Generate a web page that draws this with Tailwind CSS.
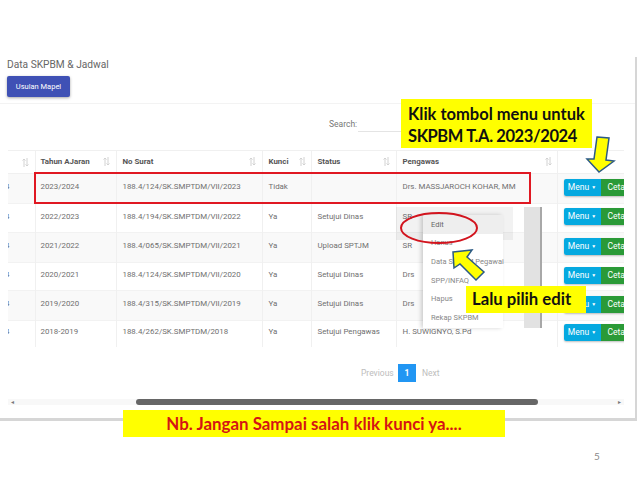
<!DOCTYPE html>
<html lang="en">
  <head>
    <meta charset="UTF-8" />
    <title>Data SKPBM</title>
    <script src="https://cdn.jsdelivr.net/npm/@tailwindcss/browser@4"></script>
  </head>
  <body class="bg-white overflow-hidden font-['Roboto',sans-serif]">
    <svg class="hidden">
      <symbol id="sort" viewBox="0 0 7 9">
        <path d="M2 9V1M.5 2.5 2 1l1.500 1.500M5 0v8M3.500 6.500 5 8l1.500-1.500" fill="none" stroke="#d2d2d2" stroke-width="1" />
      </symbol>
    </svg>
    <div class="relative w-[638px] h-[478px] bg-white overflow-hidden">
      <!-- Screenshot card -->
      <div class="mt-[57px] w-[637px] h-[364px] border-r-2 border-b-3 border-[#d6d6d6] bg-white flex flex-col">
        <div class="pl-[7px] h-[47px] border-b border-[#f3f3f3]">
          <div class="text-[10.200px] leading-[15px] text-[#666]">Data SKPBM &amp; Jadwal</div>
          <button class="w-[63px] h-[21px] bg-[#3f51b5] rounded-[2px] text-[7.500px] text-white shadow-[0_1px_3px_rgba(0,0,0,0.35)]">Usulan Mapel</button>
        </div>

        <div class="h-[46px] flex items-start pl-[329px] pt-[15px]">
          <span class="w-[29px] text-[8.500px] leading-[11px] text-[#777]">Search:</span>
          <div class="mt-[12px] w-[100px] border-b border-[#e4e4e4]"></div>
        </div>

        <!-- Table -->
        <div class="ml-[8px] w-[616px] h-[197px] overflow-hidden">
          <table class="table-fixed w-[640px] border-collapse text-[7.900px] text-[#6f6f6f] [&_td]:pb-[3px]">
            <colgroup>
              <col class="w-[27px]" />
              <col class="w-[81px]" />
              <col class="w-[146px]" />
              <col class="w-[49px]" />
              <col class="w-[85px]" />
              <col class="w-[161px]" />
              <col class="w-[91px]" />
            </colgroup>
            <thead>
              <tr class="h-[23px] border-y border-[#f0f0f0] font-bold text-[#555]">
                <th class="border-r border-[#f0f0f0] pr-[6px]"><div class="flex justify-end"><svg width="7" height="9"><use href="#sort" /></svg></div></th>
                <th class="border-r border-[#f0f0f0] pl-[5px] pr-[6px]"><div class="flex justify-between items-center"><span>Tahun AJaran</span><svg width="7" height="9"><use href="#sort" /></svg></div></th>
                <th class="border-r border-[#f0f0f0] pl-[6px] pr-[6px]"><div class="flex justify-between items-center"><span>No Surat</span><svg width="7" height="9"><use href="#sort" /></svg></div></th>
                <th class="border-r border-[#f0f0f0] pl-[6px] pr-[5px]"><div class="flex justify-between items-center"><span>Kunci</span><svg width="7" height="9"><use href="#sort" /></svg></div></th>
                <th class="border-r border-[#f0f0f0] pl-[6px] pr-[6px]"><div class="flex justify-between items-center"><span>Status</span><svg width="7" height="9"><use href="#sort" /></svg></div></th>
                <th class="border-r border-[#f0f0f0] pl-[6px] pr-[5px]"><div class="flex justify-between items-center"><span>Pengawas</span><svg width="7" height="9"><use href="#sort" /></svg></div></th>
                <th></th>
              </tr>
            </thead>
            <tbody>
              <tr class="h-[30px] bg-[#f9f9f9] border-b border-[#f2f2f2]">
                <td class="text-[#666]"><span class="block -ml-[3px]">4</span></td>
                <td class="border-x border-[#f0f0f0] pl-[5px]">2023/2024</td>
                <td class="border-r border-[#f0f0f0] pl-[6px]">188.4/124/SK.SMPTDM/VII/2023</td>
                <td class="border-r border-[#f0f0f0] pl-[6px]">Tidak</td>
                <td class="border-r border-[#f0f0f0] pl-[6px]"></td>
                <td class="border-r border-[#f0f0f0] pl-[6px]">Drs. MASSJAROCH KOHAR, MM</td>
                <td class="pl-[6px]"><div class="flex h-[17px] w-[84px] rounded-[2px] overflow-hidden text-white text-[8.500px] leading-[17px] shadow-[0_1px_2px_rgba(0,0,0,0.25)]"><span class="w-[37px] bg-[#05a9e0] text-center">Menu <span class="text-[5px] align-[1px]">▼</span></span><span class="w-[47px] pl-[7px] bg-[#2a9a37]">Cetak</span></div></td>
              </tr>
              <tr class="h-[29px] border-b border-[#f2f2f2]">
                <td class="text-[#666]"><span class="block -ml-[3px]">4</span></td>
                <td class="border-x border-[#f0f0f0] pl-[5px]">2022/2023</td>
                <td class="border-r border-[#f0f0f0] pl-[6px]">188.4/194/SK.SMPTDM/VII/2022</td>
                <td class="border-r border-[#f0f0f0] pl-[6px]">Ya</td>
                <td class="border-r border-[#f0f0f0] pl-[6px]">Setujui Dinas</td>
                <td class="border-r border-[#f0f0f0] pl-[6px]">SR</td>
                <td class="pl-[6px]"><div class="flex h-[17px] w-[84px] rounded-[2px] overflow-hidden text-white text-[8.500px] leading-[17px] shadow-[0_1px_2px_rgba(0,0,0,0.25)]"><span class="w-[37px] bg-[#05a9e0] text-center">Menu <span class="text-[5px] align-[1px]">▼</span></span><span class="w-[47px] pl-[7px] bg-[#2a9a37]">Cetak</span></div></td>
              </tr>
              <tr class="h-[30px] bg-[#f9f9f9] border-b border-[#f2f2f2]">
                <td class="text-[#666]"><span class="block -ml-[3px]">4</span></td>
                <td class="border-x border-[#f0f0f0] pl-[5px]">2021/2022</td>
                <td class="border-r border-[#f0f0f0] pl-[6px]">188.4/065/SK.SMPTDM/VII/2021</td>
                <td class="border-r border-[#f0f0f0] pl-[6px]">Ya</td>
                <td class="border-r border-[#f0f0f0] pl-[6px]">Upload SPTJM</td>
                <td class="border-r border-[#f0f0f0] pl-[6px]">SR</td>
                <td class="pl-[6px]"><div class="flex h-[17px] w-[84px] rounded-[2px] overflow-hidden text-white text-[8.500px] leading-[17px] shadow-[0_1px_2px_rgba(0,0,0,0.25)]"><span class="w-[37px] bg-[#05a9e0] text-center">Menu <span class="text-[5px] align-[1px]">▼</span></span><span class="w-[47px] pl-[7px] bg-[#2a9a37]">Cetak</span></div></td>
              </tr>
              <tr class="h-[28px] border-b border-[#f2f2f2]">
                <td class="text-[#666]"><span class="block -ml-[3px]">4</span></td>
                <td class="border-x border-[#f0f0f0] pl-[5px]">2020/2021</td>
                <td class="border-r border-[#f0f0f0] pl-[6px]">188.4/124/SK.SMPTDM/VII/2020</td>
                <td class="border-r border-[#f0f0f0] pl-[6px]">Ya</td>
                <td class="border-r border-[#f0f0f0] pl-[6px]">Setujui Dinas</td>
                <td class="border-r border-[#f0f0f0] pl-[6px]">Drs</td>
                <td class="pl-[6px]"><div class="flex h-[17px] w-[84px] rounded-[2px] overflow-hidden text-white text-[8.500px] leading-[17px] shadow-[0_1px_2px_rgba(0,0,0,0.25)]"><span class="w-[37px] bg-[#05a9e0] text-center">Menu <span class="text-[5px] align-[1px]">▼</span></span><span class="w-[47px] pl-[7px] bg-[#2a9a37]">Cetak</span></div></td>
              </tr>
              <tr class="h-[30px] bg-[#f9f9f9] border-b border-[#f2f2f2]">
                <td class="text-[#666]"><span class="block -ml-[3px]">4</span></td>
                <td class="border-x border-[#f0f0f0] pl-[5px]">2019/2020</td>
                <td class="border-r border-[#f0f0f0] pl-[6px]">188.4/315/SK.SMPTDM/VII/2019</td>
                <td class="border-r border-[#f0f0f0] pl-[6px]">Ya</td>
                <td class="border-r border-[#f0f0f0] pl-[6px]">Setujui Dinas</td>
                <td class="border-r border-[#f0f0f0] pl-[6px]">Drs</td>
                <td class="pl-[6px]"><div class="flex h-[17px] w-[84px] rounded-[2px] overflow-hidden text-white text-[8.500px] leading-[17px] shadow-[0_1px_2px_rgba(0,0,0,0.25)]"><span class="w-[37px] bg-[#05a9e0] text-center">Menu <span class="text-[5px] align-[1px]">▼</span></span><span class="w-[47px] pl-[7px] bg-[#2a9a37]">Cetak</span></div></td>
              </tr>
              <tr class="h-[27px] border-b-2 border-[#eeeeee]">
                <td class="text-[#666]"><span class="block -ml-[3px]">4</span></td>
                <td class="border-x border-[#f0f0f0] pl-[5px]">2018-2019</td>
                <td class="border-r border-[#f0f0f0] pl-[6px]">188.4/262/SK.SMPTDM/2018</td>
                <td class="border-r border-[#f0f0f0] pl-[6px]">Ya</td>
                <td class="border-r border-[#f0f0f0] pl-[6px]">Setujui Pengawas</td>
                <td class="border-r border-[#f0f0f0] pl-[6px]">H. SUWIGNYO, S.Pd</td>
                <td class="pl-[6px]"><div class="flex h-[17px] w-[84px] rounded-[2px] overflow-hidden text-white text-[8.500px] leading-[17px] shadow-[0_1px_2px_rgba(0,0,0,0.25)]"><span class="w-[37px] bg-[#05a9e0] text-center">Menu <span class="text-[5px] align-[1px]">▼</span></span><span class="w-[47px] pl-[7px] bg-[#2a9a37]">Cetak</span></div></td>
              </tr>
            </tbody>
          </table>
        </div>

        <!-- Pagination -->
        <div class="h-[52px] pt-[17px] pl-[361px] flex items-start text-[8.500px] text-[#bdbdbd]">
          <span class="w-[37px] leading-[18px]">Previous</span>
          <span class="w-[18px] h-[18px] bg-[#2196f3] text-white text-center font-bold leading-[18px]">1</span>
          <span class="ml-[6px] leading-[18px]">Next</span>
        </div>

        <!-- Horizontal scrollbar -->
        <div class="ml-[8px] w-[616px] h-[6px] pl-[3px] pr-[3px] bg-[#f8f8f8] flex items-center text-[6px] leading-[6px] text-[#777]">
          <span class="w-[5px]">◂</span>
          <div class="ml-[120px] w-[402px] h-[6px] rounded-full bg-[#666]"></div>
          <span class="ml-auto">▸</span>
        </div>
      </div>

      <!-- Dropdown and the faded layer under it -->
      <div class="absolute left-[396px] top-[207px] w-[117px] h-[33px] bg-black/5"></div>
      <div class="absolute left-[524px] top-[207px] w-[18px] h-[121px] bg-[#e2e2e2] border-r-2 border-[#a8a8a8]"></div>
      <div class="absolute left-[423px] top-[215px] w-[80px] h-[113px] bg-white shadow-[-2px_0_4px_rgba(0,0,0,0.18)] text-[7.500px] text-[#888]">
        <div class="h-[19px] pl-[8px] leading-[19px] bg-[#eeeeee] text-[#666]">Edit</div>
        <div class="h-[18px] pl-[8px] leading-[18px]">Hanus</div>
        <div class="h-[19px] pl-[8px] leading-[19px] whitespace-nowrap">Data SKPBM Pegawai</div>
        <div class="h-[19px] pl-[8px] leading-[19px]">SPP/INFAQ</div>
        <div class="h-[18px] pl-[8px] leading-[18px]">Hapus</div>
        <div class="h-[19px] pl-[8px] leading-[19px]">Rekap SKPBM</div>
      </div>

      <!-- Annotations -->
      <div class="absolute left-[401px] top-[99px] w-[191px] h-[49px] bg-[#ffff00] pl-[7px] pt-[4px] font-['Lato',sans-serif] font-bold text-[16.500px] leading-[22px] text-[#111]">
        Klik tombol menu untuk<br /><span class="tracking-[-0.4px]">SKPBM T.A. 2023/2024</span>
      </div>
      <div class="absolute left-[466px] top-[286px] w-[120px] h-[27px] bg-[#ffff00] pl-[6px] font-['Lato',sans-serif] font-bold text-[16.700px] leading-[27px] text-[#111]">Lalu pilih edit</div>
      <div class="absolute left-[123px] top-[410px] w-[382px] h-[27px] bg-[#ffff00] text-center font-['Lato',sans-serif] font-bold text-[16.900px] leading-[27px] text-[#d41414]">Nb. Jangan Sampai salah klik kunci ya....</div>

      <svg class="absolute left-0 top-0" width="638" height="478" fill="none">
        <rect x="35" y="173" width="495" height="30" stroke="#e01822" stroke-width="2" />
        <ellipse cx="439" cy="228" rx="38" ry="15" stroke="#d2141e" stroke-width="2" />
        <path d="M597 137 L609 138 L606 160 L614 161 L599 172 L587 159 L594 159 Z" fill="#ffff00" stroke="#2b5a84" stroke-width="1.500" />
        <path d="M453 252 L472 250 L467 257 L484 272 L476 280 L460 264 L454 268 Z" fill="#ffff00" stroke="#2b5a84" stroke-width="1.500" />
      </svg>

      <div class="absolute left-[594px] top-[450px] text-[10px] leading-[12px] text-[#8a8a8a] font-['Lato',sans-serif]">5</div>
    </div>
  </body>
</html>
